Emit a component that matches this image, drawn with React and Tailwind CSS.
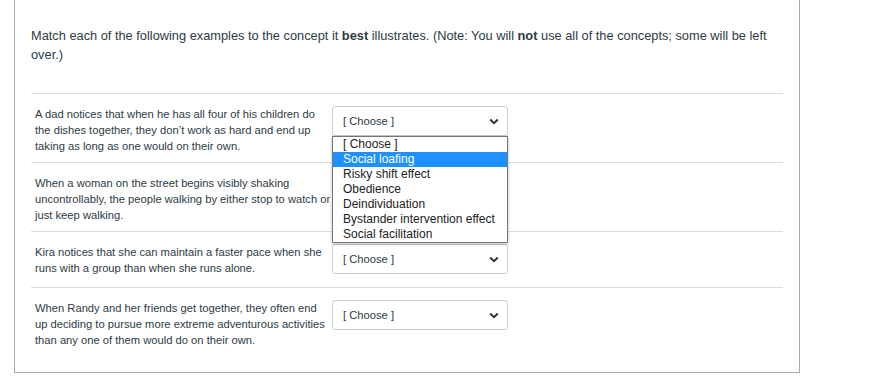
import React from 'react';

const options = [
  '[ Choose ]',
  'Social loafing',
  'Risky shift effect',
  'Obedience',
  'Deindividuation',
  'Bystander intervention effect',
  'Social facilitation',
];

const rows = [
  'A dad notices that when he has all four of his children do the dishes together, they don\u2019t work as hard and end up taking as long as one would on their own.',
  'When a woman on the street begins visibly shaking uncontrollably, the people walking by either stop to watch or just keep walking.',
  'Kira notices that she can maintain a faster pace when she runs with a group than when she runs alone.',
  'When Randy and her friends get together, they often end up deciding to pursue more extreme adventurous activities than any one of them would do on their own.',
];

const Chevron = () => (
  <svg width="10" height="7" viewBox="0 0 10 7" className="mr-[4px]">
    <polyline points="1.2,1.5 5,5.2 8.8,1.5" fill="none" stroke="#333" strokeWidth="2" />
  </svg>
);

const Select = ({ open }) => (
  <div className="relative">
    <div className="w-[176px] h-[30px] bg-white border border-[#c7cdd1] rounded-[3px] pl-[10px] pr-[4px] flex items-center justify-between text-[11.2px] text-[#2d3b45]">
      <span>[ Choose ]</span>
      <Chevron />
    </div>

    {/* open dropdown list */}
    {open && (
      <div className="absolute left-0 top-full z-10 w-[176px] bg-white border border-[#767676] shadow-[0_1px_3px_rgba(0,0,0,0.25)]">
        {options.map((opt, i) => (
          <div
            key={opt}
            className={
              i === 1
                ? 'h-[15px] leading-[15px] pl-[10px] text-[12px] bg-[#1e90ff] text-white'
                : 'h-[15px] leading-[15px] pl-[10px] text-[12px] text-[#222]'
            }
          >
            {opt}
          </div>
        ))}
      </div>
    )}
  </div>
);

const App = () => {
  return (
    <div
      className="min-h-[382px] bg-white"
      style={{ fontFamily: '"Liberation Sans", Arial, sans-serif' }}
    >
      <div className="ml-[14px] w-[786px] border-x border-b border-[#aaaaaa] px-4 pt-[26px] pb-4">
        {/* instructions */}
        <p className="text-[12.8px] leading-[19px] text-[#2d3b45] mb-[29px]">
          Match each of the following examples to the concept it <b>best</b> illustrates. (Note: You will{' '}
          <b>not</b> use all of the concepts; some will be left over.)
        </p>

        {/* matching rows */}
        {rows.map((text, i) => (
          <div key={i} className="flex items-start border-t border-[#dddddd] pt-3">
            <div className="w-[301px] pl-1 pb-2 text-[11.2px] leading-[16px] text-[#2d3b45]">{text}</div>
            <div className="mb-[13px]">
              <Select open={i === 0} />
            </div>
          </div>
        ))}
      </div>
    </div>
  );
};

export default App;
